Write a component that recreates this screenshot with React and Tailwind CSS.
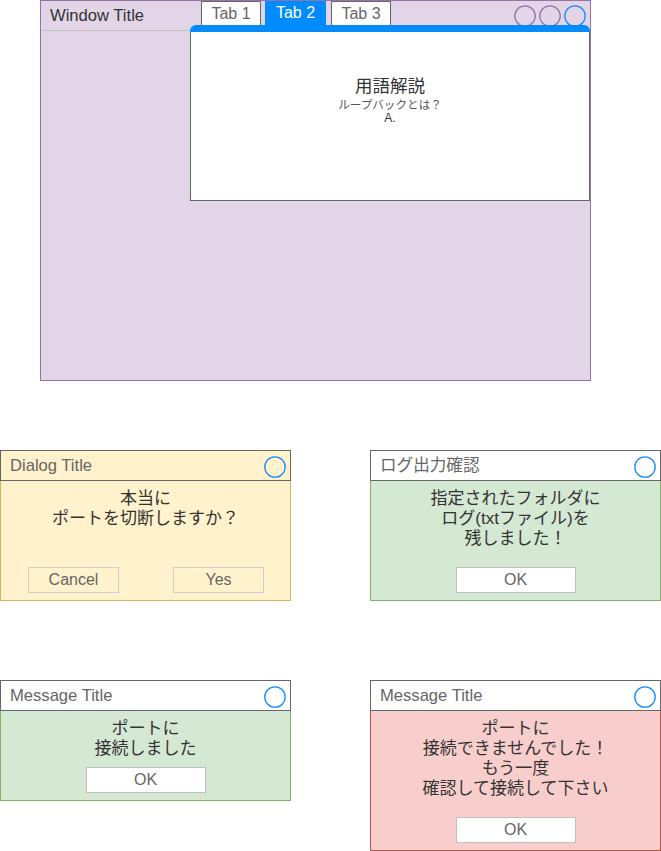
import React from "react";

function Circle({ color }) {
  return (
    <svg width="22" height="22" viewBox="0 0 22 22" className="block shrink-0">
      <circle cx="11" cy="11" r="10.2" fill="none" stroke={color} strokeWidth="1.3" />
    </svg>
  );
}

function Dialog({ title, height, headerBg, bodyClass, lines, children }) {
  return (
    <div className={`flex flex-col ${height}`}>
      <div className={`h-[31px] shrink-0 border border-[#666] ${headerBg} flex items-center justify-between pl-[9px] pr-[4px]`}>
        <span className="text-[16.6px] text-[#666] leading-none pt-[1px]">{title}</span>
        <div className="pt-[2px]">
          <Circle color="#1a8cff" />
        </div>
      </div>
      <div className={`flex-1 border-x border-b flex flex-col items-center justify-between pt-[8px] pb-[7px] ${bodyClass}`}>
        <div className="text-center text-[17px] leading-[20px] text-[#333]">
          {lines.map((l, i) => (
            <div key={i}>{l}</div>
          ))}
        </div>
        {children}
      </div>
    </div>
  );
}

function OkButton() {
  return (
    <div className="w-[120px] h-[26px] bg-white border border-[#c0c0c0] flex items-center justify-center text-[16px] text-[#666]">
      OK
    </div>
  );
}

export default function App() {
  return (
    <div className="w-[661px] h-[851px] bg-white font-['Liberation_Sans','Noto_Sans_CJK_JP',sans-serif]">
      {/* Window */}
      <div className="ml-[40px] w-[551px] h-[381px] border border-[#9673a6] bg-[#e1d5e7] flex">
        <div className="w-[149px] shrink-0">
          <div className="h-[30px] border-b border-[#c0c0c0] pl-[9px] pt-[2px] flex items-center text-[16.6px] text-[#333]">
            Window Title
          </div>
        </div>
        <div className="flex-1 flex flex-col">
          <div className="h-[24px] shrink-0 flex items-start">
            <div className="ml-[11px] w-[60px] h-[24px] bg-white border-x border-t border-[#666] flex items-center justify-center text-[16px] text-[#666]">
              Tab 1
            </div>
            <div className="ml-[4px] w-[61px] h-[24px] bg-[#008cff] flex items-center justify-center text-[16px] text-white">
              Tab 2
            </div>
            <div className="ml-[5px] w-[60px] h-[24px] bg-white border-x border-t border-[#666] flex items-center justify-center text-[16px] text-[#666]">
              Tab 3
            </div>
            <div className="ml-auto mr-[4px] mt-[4px] flex gap-[3px]">
              <Circle color="#9673a6" />
              <Circle color="#9673a6" />
              <Circle color="#1a8cff" />
            </div>
          </div>
          <div className="relative h-[176px] rounded-t-[6px] bg-[#008cff] pt-[7px] flex flex-col">
            <div className="flex-1 bg-white border-x border-b border-[#666] flex flex-col items-center pt-[44px]">
              <div className="text-[17.5px] leading-[20px] text-[#333]">用語解説</div>
              <div className="mt-[2px] text-[11.6px] leading-[14px] text-[#555]">ループバックとは？</div>
              <div className="text-[12px] leading-[12px] text-[#333]">A.</div>
            </div>
          </div>
        </div>
      </div>

      {/* Dialogs */}
      <div className="mt-[69px] grid grid-cols-[291px_291px] gap-x-[79px] gap-y-[79px] items-start">
        <Dialog
          title="Dialog Title"
          height="h-[151px]"
          headerBg="bg-[#fff2cc]"
          bodyClass="bg-[#fff2cc] border-[#d6b656]"
          lines={["本当に", "ポートを切断しますか？"]}
        >
          <div className="w-full flex justify-between pl-[27px] pr-[26px]">
            <div className="w-[91px] h-[26px] border border-[#cfcfcf] flex items-center justify-center text-[16px] text-[#666]">
              Cancel
            </div>
            <div className="w-[91px] h-[26px] border border-[#cfcfcf] flex items-center justify-center text-[16px] text-[#666]">
              Yes
            </div>
          </div>
        </Dialog>
        <Dialog
          title="ログ出力確認"
          height="h-[151px]"
          headerBg="bg-white"
          bodyClass="bg-[#d5e8d4] border-[#82b366]"
          lines={["指定されたフォルダに", "ログ(txtファイル)を", "残しました！"]}
        >
          <OkButton />
        </Dialog>
        <Dialog
          title="Message Title"
          height="h-[121px]"
          headerBg="bg-white"
          bodyClass="bg-[#d5e8d4] border-[#82b366]"
          lines={["ポートに", "接続しました"]}
        >
          <OkButton />
        </Dialog>
        <Dialog
          title="Message Title"
          height="h-[171px]"
          headerBg="bg-white"
          bodyClass="bg-[#f8cecc] border-[#b85450]"
          lines={["ポートに", "接続できませんでした！", "もう一度", "確認して接続して下さい"]}
        >
          <OkButton />
        </Dialog>
      </div>
    </div>
  );
}
